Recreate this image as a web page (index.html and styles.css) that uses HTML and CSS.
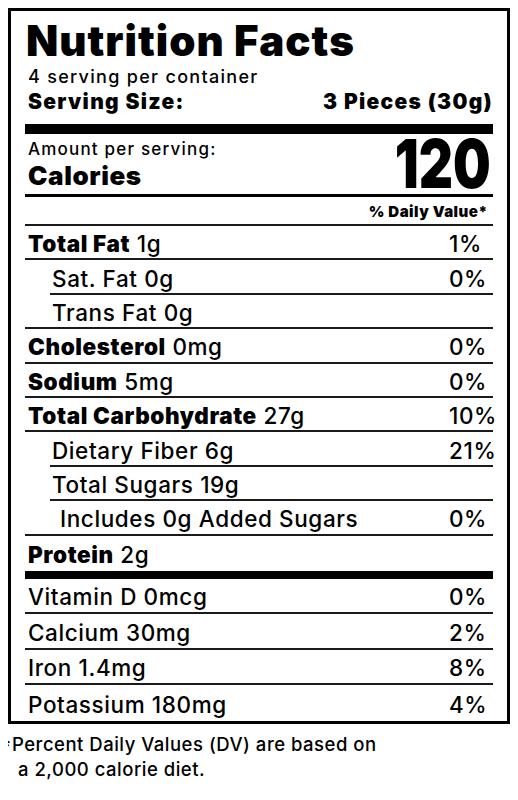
FILE: index.html
```html
<!DOCTYPE html>
<html lang="en">
<head>
    <meta charset="UTF-8">
    <meta name="viewport" content="width=device-width, initial-scale=1.0">
    <title>Nutrition Facts</title>
    <link rel="stylesheet" href="styles.css">
</head>
<body>

    <div class="label">
        <h1 class="title">Nutrition Facts</h1>
        <p class="servings">4 serving per container</p>
        <div class="serving-size">
            <span>Serving Size:</span>
            <span>3 Pieces (30g)</span>
        </div>

        <div class="calories">
            <div>
                <div class="amount">Amount per serving:</div>
                <div class="cal-label">Calories</div>
            </div>
            <div class="cal-value">120</div>
        </div>

        <div class="dv-head">% Daily Value*</div>

        <div class="row"><span><b>Total Fat</b> 1g</span><span class="pct">1%</span></div>
        <div class="row sub short"><span>Sat. Fat 0g</span><span class="pct">0%</span></div>
        <div class="row sub"><span>Trans Fat 0g</span><span class="pct"></span></div>
        <div class="row"><span><b>Cholesterol</b> 0mg</span><span class="pct">0%</span></div>
        <div class="row"><span><b>Sodium</b> 5mg</span><span class="pct">0%</span></div>
        <div class="row"><span><b>Total Carbohydrate</b> 27g</span><span class="pct">10%</span></div>
        <div class="row sub short"><span>Dietary Fiber 6g</span><span class="pct">21%</span></div>
        <div class="row sub short"><span>Total Sugars 19g</span><span class="pct"></span></div>
        <div class="row sub2"><span>Includes 0g Added Sugars</span><span class="pct">0%</span></div>
        <div class="row thick"><span><b>Protein</b> 2g</span><span class="pct"></span></div>

        <div class="row vit"><span>Vitamin D 0mcg</span><span class="pct">0%</span></div>
        <div class="row vit"><span>Calcium 30mg</span><span class="pct">2%</span></div>
        <div class="row vit"><span>Iron 1.4mg</span><span class="pct">8%</span></div>
        <div class="row vit last"><span>Potassium 180mg</span><span class="pct">4%</span></div>
    </div>

    <div class="footnote">
        <span class="star">*</span>
        <p class="note-text">Percent Daily Values (DV) are based on<br>a 2,000 calorie diet.</p>
    </div>

</body>
</html>
```

FILE: styles.css
```css
body {
    font-family: Inter, "Noto Sans", "Liberation Sans", sans-serif;
    color: #000;
    background-color: #fff;
    margin: 8px;
}
.label {
    border: 3px solid #000;
    padding: 0 14px;
}
.title {
    font-size: 42px;
    font-weight: 900;
    line-height: 1;
    letter-spacing: 1px;
    margin: 9px 0 0 1px;
}
.servings {
    font-size: 18px;
    font-weight: 500;
    line-height: 1;
    letter-spacing: 1.3px;
    margin: 6px 0 0 3px;
}
.serving-size {
    display: flex;
    justify-content: space-between;
    font-size: 21px;
    font-weight: 900;
    line-height: 1;
    letter-spacing: 1.3px;
    padding: 5px 0 12px 3px;
    border-bottom: 10px solid #000;
}
.calories {
    display: flex;
    justify-content: space-between;
    align-items: flex-end;
    border-bottom: 3px solid #000;
    height: 63px;
    box-sizing: border-box;
    padding-left: 3px;
}
.amount {
    font-size: 17px;
    font-weight: 500;
    line-height: 1;
    letter-spacing: 1.2px;
    margin-top: 10px;
}
.cal-label {
    font-size: 26px;
    font-weight: 900;
    line-height: 1;
    letter-spacing: 0.6px;
    margin-top: 5px;
    padding-bottom: 5px;
}
.cal-value {
    font-size: 68px;
    font-weight: 900;
    line-height: 1;
    transform: scaleX(0.78);
    transform-origin: right bottom;
    padding-right: 3px;
    margin-bottom: -3px;
}
.dv-head {
    text-align: right;
    font-size: 15px;
    font-weight: 900;
    height: 27px;
    line-height: 30px;
    letter-spacing: 0.5px;
    padding-right: 5px;
    border-bottom: 2px solid #1a1a1a;
}
.row {
    display: flex;
    justify-content: space-between;
    align-items: center;
    font-size: 22.5px;
    font-weight: 500;
    letter-spacing: 0.6px;
    height: 34.4px;
    box-sizing: border-box;
    padding: 3px 0 0 3px;
    border-bottom: 2px solid #1a1a1a;
}
.row b {
    font-weight: 900;
}
.row.sub {
    padding-left: 27px;
}
.row.sub.short {
    margin-left: 25px;
    padding-left: 2px;
}
.row.sub2 {
    padding-left: 35px;
}
.row.thick {
    border-bottom: 8px solid #000;
    height: 43px;
}
.row.vit {
    height: 35.5px;
}
.row.last {
    border-bottom: none;
}
.pct {
    width: 44px;
    text-align: left;
}
.footnote {
    display: flex;
    margin: 8px 0 0 -6px;
}
.star {
    width: 10px;
    flex-shrink: 0;
    font-family: "Liberation Sans", sans-serif;
    font-size: 20px;
    font-weight: 700;
    line-height: 25px;
    padding-top: 2px;
}
.note-text {
    font-size: 18.5px;
    font-weight: 500;
    line-height: 25px;
    letter-spacing: 0.5px;
    margin: 0;
    padding-left: 6px;
    text-indent: -6px;
}
```
